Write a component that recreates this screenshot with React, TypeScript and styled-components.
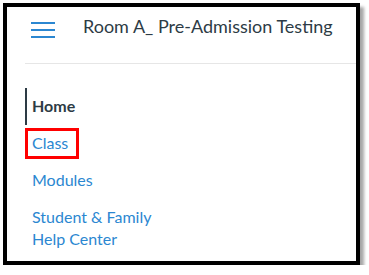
import styled, { createGlobalStyle } from 'styled-components';

const GlobalStyle = createGlobalStyle`
  html, body {
    margin: 0;
    padding: 0;
    background: #ffffff;
    font-family: Lato, "Liberation Sans", sans-serif;
  }
`;

const Frame = styled.div`
  box-sizing: border-box;
  margin: 3px 0 0 3px;
  width: 357px;
  height: 262px;
  border: 4px solid #000;
  box-shadow: 4px 4px 3px rgba(0, 0, 0, 0.35);
  background: #fff;
  display: flex;
  flex-direction: column;
  overflow: hidden;
`;

const Header = styled.div`
  flex-shrink: 0;
  display: flex;
  align-items: flex-start;
  height: 56px;
  margin-left: 18px;
  border-bottom: 1px solid #e6e6e6;
`;

const MenuButton = styled.div`
  width: 24px;
  margin: 15px 0 0 6px;
  display: flex;
  flex-direction: column;
  gap: 5px;
`;

const MenuLine = styled.span`
  display: block;
  height: 2px;
  background: #2b87d1;
`;

const Title = styled.h1`
  margin: 8px 0 0 28px;
  font-size: 18px;
  line-height: normal;
  font-weight: 400;
  color: #2d3b45;
  white-space: nowrap;
`;

const Nav = styled.nav`
  display: flex;
  flex-direction: column;
  align-items: flex-start;
  padding: 24px 0 0 18px;
`;

const NavItem = styled.a<{ active?: boolean }>`
  display: block;
  font-size: 16px;
  line-height: 22px;
  padding: 7px 0 8px ${p => (p.active ? '5px' : '7px')};
  color: ${p => (p.active ? '#2d3b45' : '#2b87d1')};
  font-weight: ${p => (p.active ? 700 : 400)};
  border-left: ${p => (p.active ? '2px solid #2d3b45' : 'none')};
  text-decoration: none;
`;

const BoxedItem = styled.a`
  display: block;
  font-size: 16px;
  line-height: 22px;
  margin: 3px 0;
  padding: 1px 8px 2px 4px;
  border: 3px solid #ff0000;
  color: #2b87d1;
  text-decoration: none;
`;

export default function App() {
  return (
    <>
      <GlobalStyle />
      <Frame>
        <Header>
          <MenuButton>
            <MenuLine />
            <MenuLine />
            <MenuLine />
          </MenuButton>
          <Title>Room A_ Pre-Admission Testing</Title>
        </Header>
        <Nav>
          <NavItem active>Home</NavItem>
          <BoxedItem>Class</BoxedItem>
          <NavItem>Modules</NavItem>
          <NavItem>
            Student &amp; Family
            <br />
            Help Center
          </NavItem>
        </Nav>
      </Frame>
    </>
  );
}
